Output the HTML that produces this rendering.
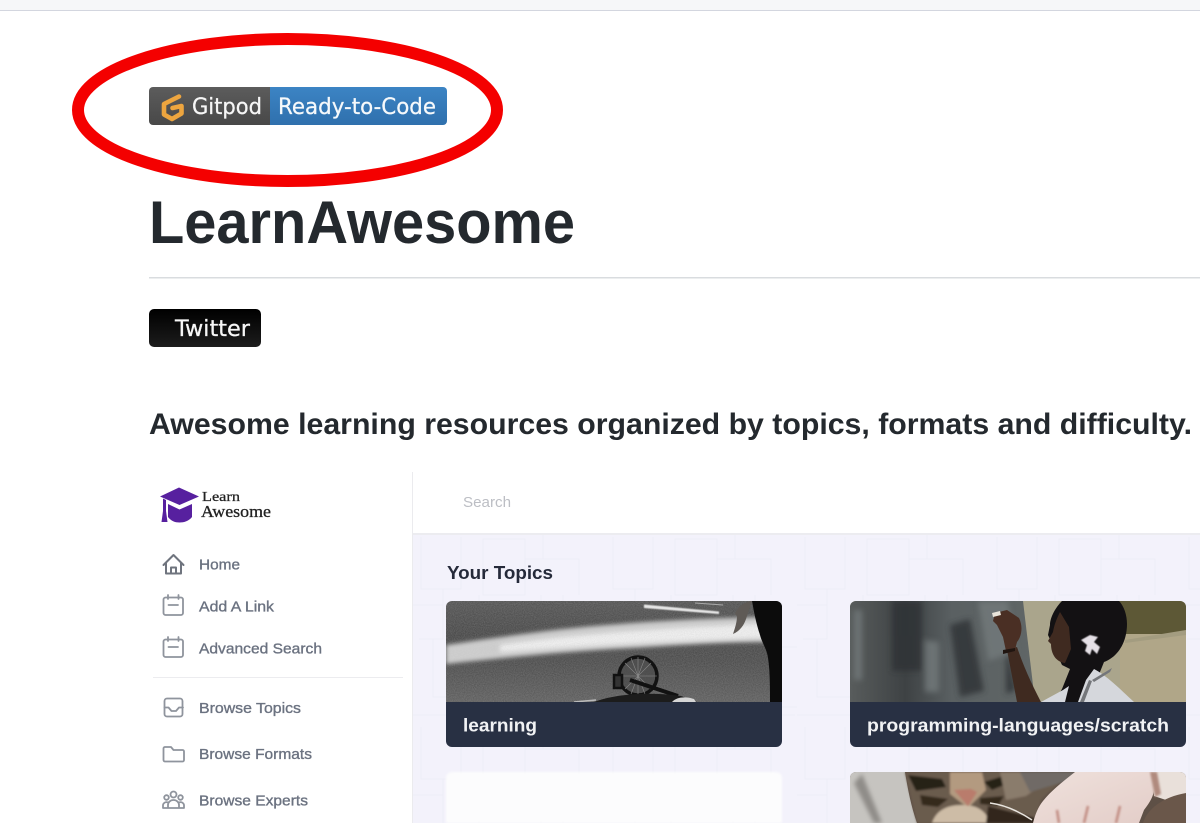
<!DOCTYPE html>
<html lang="en"><head><meta charset="utf-8"><title>LearnAwesome</title>
<style>html,body{margin:0;padding:0;background:#fff;width:1200px;height:823px;overflow:hidden}svg{display:block}
.s{font-family:"Liberation Sans",sans-serif}
.d{font-family:"DejaVu Sans",sans-serif}
.n{font-family:"Liberation Sans",sans-serif;font-size:15px;fill:#6b7280;stroke:#6b7280;stroke-width:.35}
.i{fill:none;stroke:#8f949d;stroke-width:1.800;stroke-linejoin:round;stroke-linecap:round}
</style></head><body>
<svg width="1200" height="823" viewBox="0 0 1200 823" xmlns="http://www.w3.org/2000/svg">
<defs>
<pattern id="pt" width="192" height="190" patternUnits="userSpaceOnUse" x="413" y="535">
<path d="M8 2v52h40V2M70 4h42v56H70zM112 24h54v36M130 0v24M30 54v50H6M66 60v46h62V60M150 60v52h42M0 70h30M20 104v58h52M72 132h58v48H72zM130 112v20M150 112v60h42M0 180h190" fill="none" stroke="#eeedf7" stroke-width="1"/>
</pattern>
<linearGradient id="bl" x1="0" y1="0" x2="0" y2="1"><stop offset="0" stop-color="#5c5c5c"/><stop offset="1" stop-color="#484848"/></linearGradient>
<linearGradient id="bb" x1="0" y1="0" x2="0" y2="1"><stop offset="0" stop-color="#3c84c4"/><stop offset="1" stop-color="#2f70ad"/></linearGradient>
<linearGradient id="tw" x1="0" y1="0" x2="0" y2="1"><stop offset="0" stop-color="#000"/><stop offset="1" stop-color="#1c1c1c"/></linearGradient>
<linearGradient id="road" x1="0" y1="0" x2="0" y2="1"><stop offset="0" stop-color="#565656"/><stop offset=".35" stop-color="#4a4a4a"/><stop offset=".6" stop-color="#4e4e4e"/><stop offset="1" stop-color="#606060"/></linearGradient>
<linearGradient id="board" x1="0" y1="0" x2="1" y2="0"><stop offset="0" stop-color="#585c5c"/><stop offset=".3" stop-color="#3e4244"/><stop offset=".55" stop-color="#5a6062"/><stop offset="1" stop-color="#606666"/></linearGradient>
<linearGradient id="hand" x1="0" y1="0" x2="1" y2="1"><stop offset="0" stop-color="#efe1dc"/><stop offset="1" stop-color="#e3cdc8"/></linearGradient>
<filter id="noise" x="0" y="0" width="100%" height="100%"><feTurbulence type="fractalNoise" baseFrequency=".9" numOctaves="2" seed="3"/><feColorMatrix values="0 0 0 0 .5 0 0 0 0 .5 0 0 0 0 .5 0 0 0 1.1 -.25"/></filter>
<filter id="b05"><feGaussianBlur stdDeviation=".5"/></filter>
<filter id="b1"><feGaussianBlur stdDeviation="1"/></filter>
<filter id="b2"><feGaussianBlur stdDeviation="2"/></filter>
<filter id="b3"><feGaussianBlur stdDeviation="3"/></filter>
<clipPath id="c1"><path d="M446 702V607a6 6 0 0 1 6-6h324a6 6 0 0 1 6 6v95z"/></clipPath>
<clipPath id="c2"><path d="M850 702V607a6 6 0 0 1 6-6h324a6 6 0 0 1 6 6v95z"/></clipPath>
<clipPath id="c3"><path d="M850 823V778a6 6 0 0 1 6-6h324a6 6 0 0 1 6 6v45z"/></clipPath>
</defs>

<!-- browser strip -->
<rect width="1200" height="10" fill="#f6f7f9"/>
<rect y="10" width="1200" height="1" fill="#d3d6df"/>

<!-- badge -->
<path d="M153 87h117v38H153a4 4 0 0 1-4-4V91a4 4 0 0 1 4-4z" fill="url(#bl)"/>
<path d="M270 87h173a4 4 0 0 1 4 4v30a4 4 0 0 1-4 4H270z" fill="url(#bb)"/>
<path d="M179 96.500L164 104V114.500L172 119L181.500 113.500V106L172.500 108" fill="none" stroke="#eda53f" stroke-width="4.600" stroke-linejoin="round" stroke-linecap="round"/>
<text class="d" x="192" y="114" font-size="22" fill="#f6f6f6" stroke="#f6f6f6" stroke-width=".25" textLength="70" lengthAdjust="spacingAndGlyphs">Gitpod</text>
<text class="d" x="278" y="114" font-size="22" fill="#f6f9fb" stroke="#f6f9fb" stroke-width=".25" textLength="158" lengthAdjust="spacingAndGlyphs">Ready-to-Code</text>

<!-- red ellipse -->
<ellipse cx="287.500" cy="110" rx="209.500" ry="71" fill="none" stroke="#f40000" stroke-width="12"/>

<!-- heading -->
<text class="s" x="149" y="243" font-size="60" font-weight="700" fill="#24292e" textLength="426" lengthAdjust="spacingAndGlyphs">LearnAwesome</text>
<rect x="149" y="277" width="1051" height="1.500" fill="#d9dcdf"/>

<!-- twitter -->
<rect x="149" y="309" width="112" height="38" rx="5" fill="url(#tw)"/>
<text class="d" x="175" y="336" font-size="22" fill="#f7f7f7" stroke="#f7f7f7" stroke-width=".25" textLength="75" lengthAdjust="spacingAndGlyphs">Twitter</text>

<text class="s" x="149" y="434" font-size="30" font-weight="700" fill="#24292e" textLength="1043" lengthAdjust="spacingAndGlyphs">Awesome learning resources organized by topics, formats and difficulty.</text>

<!-- app: main background -->
<rect x="413" y="535" width="787" height="288" fill="#f3f2fb"/>
<rect x="413" y="535" width="787" height="288" fill="url(#pt)"/>
<rect x="413" y="533" width="787" height="2" fill="#ececf0"/>
<rect x="412" y="472" width="1" height="351" fill="#ebebee"/>
<text class="s" x="463" y="507" font-size="15" fill="#bcbec4" textLength="48" lengthAdjust="spacingAndGlyphs">Search</text>

<!-- logo -->
<path d="M179 487.500l20 9-19.500 8.500-19.500-8.500z" fill="#57209f"/>
<path d="M168 504l11.500 5.500L192 504v13c-3 4-8 5.500-12.500 5.500S171 521 168 517z" fill="#57209f"/>
<path d="M163 498.500l3 1.500v11l1.500 11h-6l1.500-11z" fill="#57209f"/>
<text x="202" y="501" font-family="'Liberation Serif',serif" font-size="14" fill="#222" stroke="#222" stroke-width=".25" textLength="38" lengthAdjust="spacingAndGlyphs">Learn</text>
<text x="201" y="517" font-family="'Liberation Serif',serif" font-size="17" fill="#222" stroke="#222" stroke-width=".3" textLength="70" lengthAdjust="spacingAndGlyphs">Awesome</text>

<!-- nav -->
<path class="i" style="stroke:#6f747e;stroke-width:2" d="M163.500 565l10-10 10 10M166 563v10.500h15V563M171 573.500v-6h5v6"/>
<g class="i"><rect x="163.500" y="597.500" width="19.500" height="17.500" rx="2"/><path d="M168 595v4M178.500 595v4M168.500 605h9.500"/></g>
<g class="i"><rect x="163.500" y="639.500" width="19.500" height="17.500" rx="2"/><path d="M168 637v4M178.500 637v4M168.500 647h9.500"/></g>
<g class="i"><rect x="164.500" y="698.500" width="18" height="18" rx="2.500"/><path d="M164.500 707.500h4l3 3.500h4.500l3-3.500h4"/></g>
<path class="i" d="M163.500 748.500a1.500 1.500 0 0 1 1.500-1.500h6l2.500 3h9a1.500 1.500 0 0 1 1.500 1.500v8.500a1.500 1.500 0 0 1-1.500 1.500H165a1.500 1.500 0 0 1-1.500-1.500z"/>
<g class="i" stroke-width="1.500"><circle cx="173.500" cy="794.500" r="3"/><circle cx="166.500" cy="797.500" r="2.300"/><circle cx="180.500" cy="797.500" r="2.300"/><path d="M163 808v-3a3.500 3.500 0 0 1 5-2.500M184 808v-3a3.500 3.500 0 0 0-5-2.500M168 808v-3a5.500 5 0 0 1 11 0v3zM163 808h21"/></g>
<text class="n" x="199" y="569.500" textLength="41" lengthAdjust="spacingAndGlyphs">Home</text>
<text class="n" x="199" y="611.500" textLength="75" lengthAdjust="spacingAndGlyphs">Add A Link</text>
<text class="n" x="199" y="653.500" textLength="123" lengthAdjust="spacingAndGlyphs">Advanced Search</text>
<rect x="153" y="677" width="250" height="1" fill="#ececef"/>
<text class="n" x="199" y="713" textLength="102" lengthAdjust="spacingAndGlyphs">Browse Topics</text>
<text class="n" x="199" y="759" textLength="113" lengthAdjust="spacingAndGlyphs">Browse Formats</text>
<text class="n" x="199" y="805.500" textLength="109" lengthAdjust="spacingAndGlyphs">Browse Experts</text>

<!-- Your topics -->
<text class="s" x="447" y="579" font-size="18.500" font-weight="700" fill="#252a3a" textLength="106" lengthAdjust="spacingAndGlyphs">Your Topics</text>

<!-- card 1 -->
<path d="M446 700v41a6 6 0 0 0 6 6h324a6 6 0 0 0 6-6v-41z" fill="#283043"/>
<g clip-path="url(#c1)">
<rect x="446" y="601" width="336" height="101" fill="url(#road)"/>
<path d="M446 645C500 637 560 628 620 624C670 620 720 618 765 617L768 642C720 642 680 645 630 648C570 651 510 657 446 664z" fill="#cfcfcf" filter="url(#b2)"/>
<path d="M500 645C570 634 680 627 762 624L764 638C680 640 580 646 500 652z" fill="#f0f0f0" filter="url(#b2)"/>
<rect x="446" y="601" width="336" height="101" filter="url(#noise)" opacity=".35"/>
<path d="M644 604.500l75 7v2.500l-75-6z" fill="#e6e6e6" filter="url(#b05)"/>
<path d="M695 603l28 2" stroke="#aaa" stroke-width="1"/>
<path d="M752 601h30v101h-12c0-14 0-32-2-44-1-9-6-15-8-23-4-12-6-23-8-34z" fill="#0c0c0c"/>
<path d="M750 601c-7 2-13 7-15 13l2 2c0 6-2 12-4 18 7-3 11-9 13-15 2-6 4-12 6-18z" fill="#5f5a56"/>
<circle cx="638" cy="676" r="19" fill="#4a4a4a" fill-opacity=".7" stroke="#121212" stroke-width="3.500"/>
<path d="M638 657v38M619 676h38M625 663l26 26M651 663l-26 26M631 658l14 36M645 658l-14 36" stroke="#8a8a8a" stroke-width=".6"/>
<path d="M614 675h8v13h-8z" fill="#333" stroke="#111" stroke-width="2.500"/>
<path d="M630 680l30 10 18 6" stroke="#111" stroke-width="4" fill="none"/>
<path d="M594 702c18-7 50-11 87-6l16 6z" fill="#1c1c1c"/>
<path d="M574 702l22-2" stroke="#bbb" stroke-width="1.500"/>
<path d="M672 702c4-5 14-6 22-3l2 3z" fill="#d5d5d5"/>
</g>
<text class="s" x="463" y="731.500" font-size="18.500" font-weight="700" fill="#f1f2f4" textLength="74" lengthAdjust="spacingAndGlyphs">learning</text>

<!-- card 2 -->
<path d="M850 700v41a6 6 0 0 0 6 6h324a6 6 0 0 0 6-6v-41z" fill="#283043"/>
<g clip-path="url(#c2)">
<rect x="850" y="601" width="336" height="101" fill="#aaa58c"/>
<rect x="1120" y="633" width="66" height="69" fill="#b0a688"/>
<rect x="1118" y="601" width="68" height="33" fill="#5d5836"/>
<path d="M1125 640l61-10v5l-61 8z" fill="#a39c80"/>
<path d="M850 601h173l12 101H850z" fill="url(#board)"/>
<g filter="url(#b3)" opacity=".8"><path d="M892 601h30v70h-30zM950 625l20-6 14 72-24 6zM1006 640l10 50-10 4z" fill="#2f3335"/><path d="M854 610h8v70h-8zM925 640l14 2v50h-14zM978 601h30l8 50-28 10z" fill="#737a7c"/></g>
<path d="M1007 650l10-3c6 18 14 36 24 55h-24z" fill="#3f2a20"/>
<path d="M995 613l12-3 12 8c4 8 3 18-2 24l-2 8-9 1-3-14-6-12-4-4z" fill="#4a2f24"/>
<path d="M992 613l8-2 1 4-8 2z" fill="#e8e4da"/>
<path d="M1003 650l12-2v3l-12 3z" fill="#201510"/>
<path d="M1062 601c-6 6-12 16-12 24l-2 10 14 30 8 4-8 20-8 13h36l10-30 4-10c14-5 23-20 23-38 0-9-3-18-8-23z" fill="#131113"/>
<path d="M1060 612c-4 8-6 14-7 20l-5 9 3 3c0 10 5 18 14 19l6-14-2-22z" fill="#3f2a20"/>
<path d="M1041 702l22-12 6-4-4 16zM1078 702l8-22 8-11c12 6 26 20 40 33z" fill="#d5d7dc"/>
<path d="M1080 702l9-22 3 1-8 21zM1092 680l20-12-2 4-16 10z" fill="#74767a"/>
<path d="M1081 640l9-5 8 2-4 5 6 5-3 7-5-5-2 6-5-4 2-6z" fill="#e5e0e6" filter="url(#b05)"/>
</g>
<text class="s" x="867" y="731.500" font-size="18.500" font-weight="700" fill="#f1f2f4" textLength="302" lengthAdjust="spacingAndGlyphs">programming-languages/scratch</text>

<!-- card 3 white -->
<path d="M446 823V778a6 6 0 0 1 6-6h324a6 6 0 0 1 6 6v45z" fill="#fcfcfd" filter="url(#b1)"/>

<!-- card 4 cat -->
<g clip-path="url(#c3)">
<rect x="850" y="772" width="336" height="51" fill="#5e5046"/>
<path d="M850 772h55c3 18 6 34 12 51h-67z" fill="#c6c4c0"/>
<path d="M862 774l20 49h-8l-20-40z" fill="#8f8c88" filter="url(#b2)"/>
<g filter="url(#b1)">
<path d="M905 772h170c-10 6-22 16-34 28l-6 23H917c-4-17-8-34-12-51z" fill="#6b5c4d"/>
<path d="M950 772h32l4 18-18 18-18-14z" fill="#b39a80"/>
<path d="M908 775l34 4 4 8-30 4zM984 782l26-8 12 4-30 12z" fill="#272019"/>
<path d="M1000 772h60l-34 24-20 4z" fill="#8a7b6c"/>
<path d="M920 795l28 4-10 8-16-2zM980 798l24-2-6 10-18-2z" fill="#34291f"/>
<path d="M932 823c4-12 14-18 30-18s24 6 28 18z" fill="#cdbca6"/>
<path d="M988 806l48 12-2 5h-48z" fill="#30261f"/>
<path d="M1020 772h60l-10 8-40 12z" fill="#6f6a66"/>
</g>
<path d="M954 790l17-1 6 3-9 14z" fill="#b97b6c" filter="url(#b1)"/>
<path d="M990 803c15 2 30 9 42 17" stroke="#e8e4de" stroke-width="1.500" fill="none"/>
<path d="M1075 772h77l2 16c0 8-4 14-10 22l-5 13h-106c2-8 5-16 10-22 8-10 18-18 32-29z" fill="url(#hand)"/>
<path d="M1152 772h34v22l-20 6-12-4z" fill="#e9e0da"/>
<path d="M1143 823c4-14 20-26 43-30v30z" fill="#6a574a"/>
<path d="M1150 772l7 0 4 22-6 3z" fill="#b08a7e" filter="url(#b1)"/>
<path d="M1057 810l2 13M1088 806l-4 17M1120 806l-4 17" stroke="#c08a80" stroke-width="2.500" fill="none" filter="url(#b1)"/>
</g>
</svg>
</body></html>
